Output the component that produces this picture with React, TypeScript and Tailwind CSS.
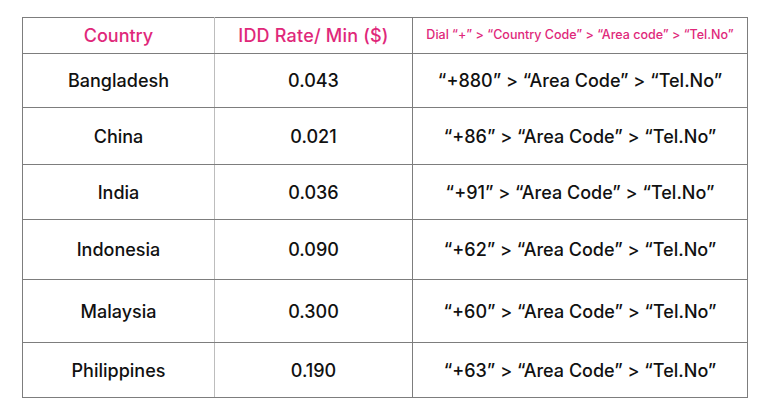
const rows = [
  { country: "Bangladesh", rate: "0.043", code: "+880", h: "h-[54px]" },
  { country: "China", rate: "0.021", code: "+86", h: "h-[57px]" },
  { country: "India", rate: "0.036", code: "+91", h: "h-[55px]" },
  { country: "Indonesia", rate: "0.090", code: "+62", h: "h-[60px]" },
  { country: "Malaysia", rate: "0.300", code: "+60", h: "h-[63px]" },
  { country: "Philippines", rate: "0.190", code: "+63", h: "h-[55px]" },
];

export default function App() {
  return (
    <div className="w-[768px] h-[414px] bg-white pt-[17px] pl-[22px] font-['Inter','Liberation_Sans',sans-serif]">
      <table className="border-collapse table-fixed w-[725px] text-center text-[#111]">
        <colgroup>
          <col className="w-[192px]" />
          <col className="w-[198px]" />
          <col className="w-[335px]" />
        </colgroup>
        <thead>
          <tr className="h-[36px] text-[#e0287a]">
            <th className="border border-[#7d7d7d] border-r-[#bdbdbd] text-[18px] font-medium">Country</th>
            <th className="border border-[#7d7d7d] border-l-[#bdbdbd] text-[18px] font-medium tracking-[0.2px]">IDD Rate/ Min ($)</th>
            <th className="border border-[#7d7d7d] text-[12.5px] font-medium">
              Dial “+” &gt; “Country Code” &gt; “Area code” &gt; “Tel.No”
            </th>
          </tr>
        </thead>
        <tbody>
          {rows.map((r) => (
            <tr key={r.country} className={r.h}>
              <td className="border border-[#7d7d7d] border-r-[#bdbdbd] text-[18px] font-medium">{r.country}</td>
              <td className="border border-[#7d7d7d] border-l-[#bdbdbd] text-[18px] font-medium">{r.rate}</td>
              <td className="border border-[#7d7d7d] text-[18px] font-medium">
                “{r.code}” &gt; “Area Code” &gt; “Tel.No”
              </td>
            </tr>
          ))}
        </tbody>
      </table>
    </div>
  );
}
